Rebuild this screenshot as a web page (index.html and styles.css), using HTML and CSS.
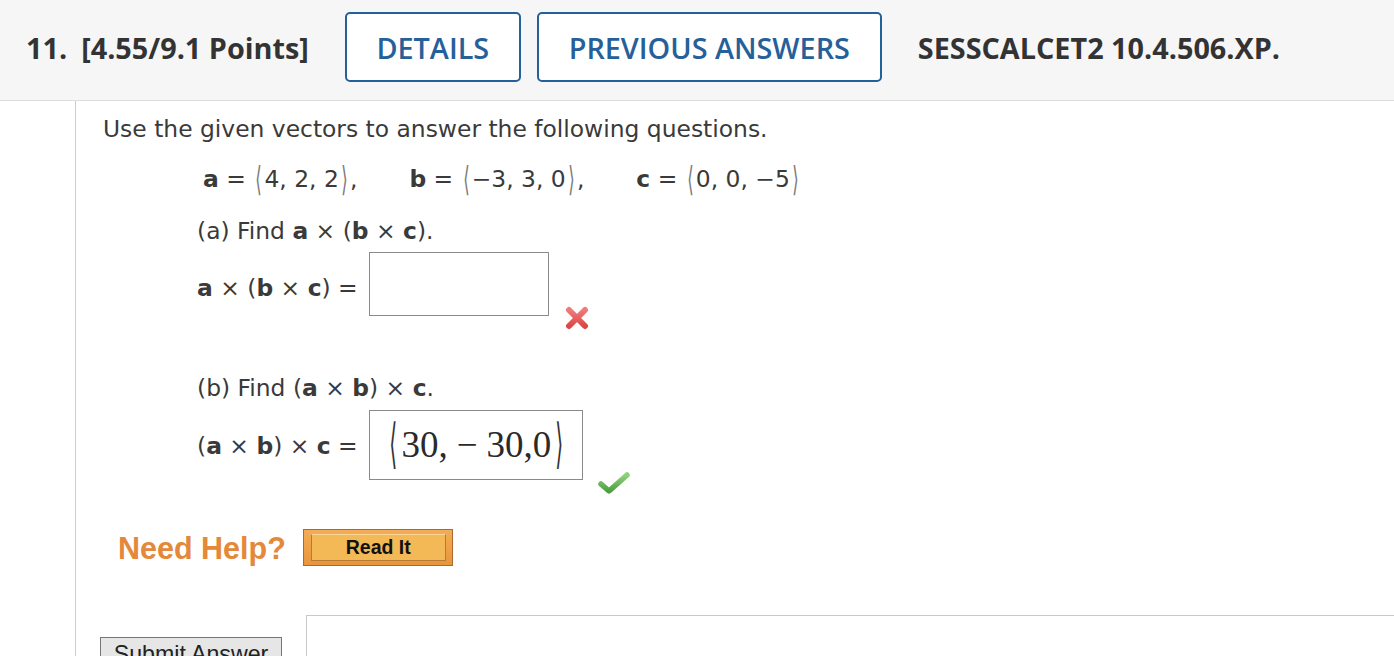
FILE: index.html
```html
<!DOCTYPE html>
<html lang="en">
<head>
<meta charset="utf-8">
<title>Question 11</title>
<link rel="stylesheet" href="styles.css">
</head>
<body>
<header class="qhead">
  <span class="qnum">11.</span>
  <span class="qpts">[4.55/9.1 Points]</span>
  <button class="hbtn hbtn-details">DETAILS</button>
  <button class="hbtn hbtn-prev">PREVIOUS ANSWERS</button>
  <span class="qsrc">SESSCALCET2 10.4.506.XP.</span>
</header>
<main class="qbody">
  <p class="intro">Use the given vectors to answer the following questions.</p>
  <p class="vectors">
    <span class="vec"><b>a</b> = <span class="ang">⟨</span>4, 2, 2<span class="ang">⟩</span>,</span>
    <span class="vec"><b>b</b> = <span class="ang">⟨</span>−3, 3, 0<span class="ang">⟩</span>,</span>
    <span class="vec"><b>c</b> = <span class="ang">⟨</span>0, 0, −5<span class="ang">⟩</span></span>
  </p>
  <p class="part">(a) Find <b>a</b> × (<b>b</b> × <b>c</b>).</p>
  <div class="ansrow ansrow-a">
    <span class="alabel"><b>a</b> × (<b>b</b> × <b>c</b>) =</span>
    <div class="abox abox-a"></div>
    <svg class="mark mark-x" width="24" height="24" viewBox="0 0 24 24" aria-label="incorrect">
      <defs>
        <linearGradient id="rx" x1="0" y1="0" x2="0" y2="1">
          <stop offset="0" stop-color="#f07a7a"/>
          <stop offset="1" stop-color="#dc4848"/>
        </linearGradient>
      </defs>
      <path d="M4 4 L20 20 M20 4 L4 20" stroke="url(#rx)" stroke-width="6" stroke-linecap="round" fill="none"/>
    </svg>
  </div>
  <p class="part part-b">(b) Find (<b>a</b> × <b>b</b>) × <b>c</b>.</p>
  <div class="ansrow ansrow-b">
    <span class="alabel">(<b>a</b> × <b>b</b>) × <b>c</b> =</span>
    <div class="abox abox-b"><span class="math"><span class="mang">⟨</span>30,<span class="mop">−</span>30,0<span class="mang">⟩</span></span></div>
    <svg class="mark mark-ok" width="34" height="26" viewBox="0 0 34 26" aria-label="correct">
      <defs>
        <linearGradient id="gk" x1="0" y1="0" x2="0" y2="1">
          <stop offset="0" stop-color="#8fd27e"/>
          <stop offset="1" stop-color="#4f9f42"/>
        </linearGradient>
      </defs>
      <path d="M4 14 L12 21 L30 5" stroke="url(#gk)" stroke-width="5.5" stroke-linecap="round" stroke-linejoin="round" fill="none"/>
    </svg>
  </div>
  <div class="helprow">
    <span class="needhelp">Need Help?</span>
    <button class="readit"><span class="readit-in">Read It</span></button>
  </div>
  <div class="submitrow">
    <button class="submit">Submit Answer</button>
    <div class="notes"></div>
  </div>
</main>
</body>
</html>
```
FILE: styles.css
```css
html, body {
  margin: 0;
  padding: 0;
  background: #ffffff;
  overflow: hidden;
}
body {
  width: 1394px;
  height: 656px;
}
.qhead {
  box-sizing: border-box;
  height: 101px;
  padding: 12px 0 18px 26px;
  background: #f6f6f6;
  border-bottom: 1px solid #dedede;
  display: flex;
  align-items: center;
  font-family: "Open Sans", sans-serif;
  color: #333333;
}
.qnum {
  font-size: 28.8px;
  font-weight: 700;
  margin-right: 14px;
}
.qpts {
  font-size: 28.8px;
  font-weight: 700;
  margin-right: 36px;
}
.hbtn {
  box-sizing: border-box;
  height: 70px;
  padding: 0;
  background: #ffffff;
  border: 2px solid #26609a;
  border-radius: 5px;
  color: #26609a;
  font-family: "Open Sans", sans-serif;
  font-size: 28.8px;
  font-weight: 600;
}
.hbtn-details {
  width: 176px;
  margin-right: 16px;
}
.hbtn-prev {
  width: 345px;
  margin-right: 36px;
}
.qsrc {
  font-size: 28.8px;
  font-weight: 700;
}
.qbody {
  box-sizing: border-box;
  margin-left: 75px;
  border-left: 1px solid #cccccc;
  height: 555px;
  padding: 14px 0 0 27px;
  font-family: "DejaVu Sans", Verdana, sans-serif;
  font-size: 23.4px;
  line-height: 28px;
  color: #3a3a3a;
}
.qbody p {
  margin: 0;
}
.qbody b {
  font-weight: 700;
}
.vectors {
  margin-top: 22px !important;
  padding-left: 100px;
  display: flex;
}
.vec {
  white-space: pre;
}
.vec + .vec {
  margin-left: 52px;
}
.ang {
  display: inline-block;
  color: #777777;
  margin: 0 1px;
  transform: scale(0.7, 1.45);
}
.part {
  margin-top: 24px !important;
  padding-left: 94px;
}
.part-b {
  margin-top: 58px !important;
}
.ansrow {
  display: flex;
  align-items: flex-start;
  padding-left: 94px;
  margin-top: 7px;
}
.ansrow-a {
  height: 64px;
}
.ansrow-b {
  height: 70px;
  margin-top: 8px;
}
.alabel {
  margin-top: 22px;
  width: 172px;
}
.abox {
  box-sizing: border-box;
  flex: none;
  border: 1px solid #8a8a8a;
  background: #ffffff;
}
.abox-a {
  width: 180px;
  height: 64px;
}
.abox-b {
  width: 214px;
  height: 70px;
  display: flex;
  align-items: center;
  padding-left: 15px;
}
.math {
  font-family: "Liberation Serif", "DejaVu Serif", serif;
  font-size: 37px;
  color: #2a2a2a;
  line-height: 40px;
  white-space: nowrap;
}
.mang {
  display: inline-block;
  font-family: "DejaVu Sans", sans-serif;
  color: #333333;
  margin: 0 1px;
  transform: scale(0.55, 1.45);
}
.mop {
  margin: 0 9px;
}
.mark {
  flex: none;
}
.mark-x {
  margin: 54px 0 0 16px;
}
.mark-ok {
  margin: 60px 0 0 14px;
}
.helprow {
  display: flex;
  align-items: center;
  margin-top: 49px;
  padding-left: 15px;
}
.needhelp {
  font-family: "Liberation Sans", Arial, sans-serif;
  font-weight: 700;
  font-size: 30.5px;
  color: #e4883a;
  margin-right: 17px;
}
.readit {
  box-sizing: border-box;
  width: 150px;
  height: 37px;
  padding: 4px 6px 4px 7px;
  border: 1px solid #a96a2c;
  background: linear-gradient(#f3ad57, #e8953a);
  display: flex;
}
.readit-in {
  flex: 1;
  box-sizing: border-box;
  border: 1px solid #b77a37;
  border-top-color: #fbd79b;
  background: #f2b956;
  font-family: "Liberation Sans", Arial, sans-serif;
  font-weight: 700;
  font-size: 19.5px;
  line-height: 25px;
  color: #111111;
  text-align: center;
}
.submitrow {
  display: flex;
  align-items: flex-start;
  margin-top: 49px;
  margin-left: -3px;
}
.submit {
  box-sizing: border-box;
  width: 182px;
  height: 34px;
  margin-top: 22px;
  margin-right: 24px;
  padding: 0;
  background: #e6e6e6;
  border: 1px solid #767676;
  font-family: "Liberation Sans", Arial, sans-serif;
  font-size: 23.2px;
  color: #222222;
  line-height: 30px;
}
.notes {
  flex: 1;
  height: 60px;
  border-top: 1px solid #c8c8c8;
  border-left: 1px solid #c8c8c8;
}
```
